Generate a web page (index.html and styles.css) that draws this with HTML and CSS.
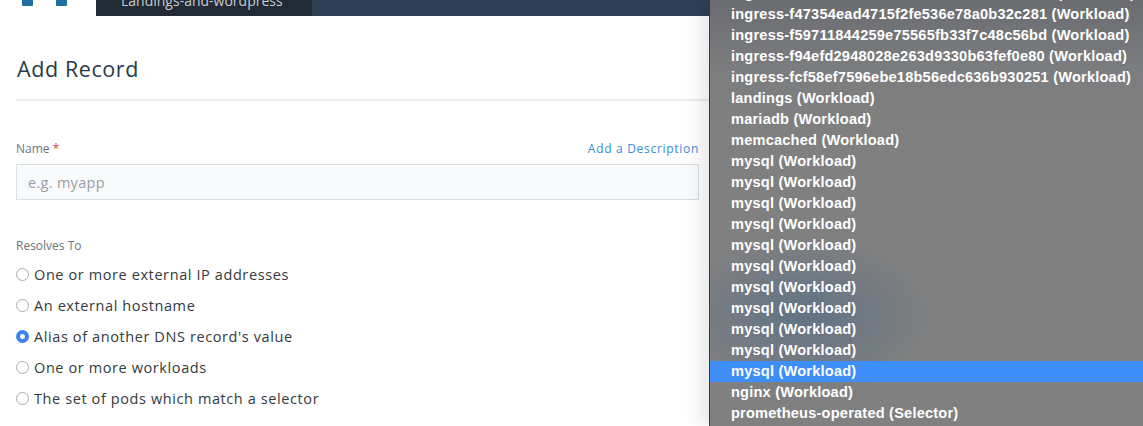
FILE: index.html
```html
<!DOCTYPE html>
<html>
<head>
<meta charset="utf-8">
<link rel="stylesheet" href="styles.css">
</head>
<body>
<header class="topbar">
  <div class="logo"><span class="sq"></span><span class="sq"></span></div>
  <div class="tab"><span class="tab-text">Landings-and-wordpress</span></div>
  <div class="bar-rest"></div>
</header>
<main class="page">
  <h1 class="title">Add Record</h1>
  <div class="rule"></div>
  <section class="form">
    <div class="label-row">
      <span class="label">Name <span class="req">*</span></span>
      <a class="link">Add a Description</a>
    </div>
    <div class="input"><span class="placeholder">e.g. myapp</span></div>
    <div class="label resolves">Resolves To</div>
    <ul class="radios">
      <li><span class="radio"></span>One or more external IP addresses</li>
      <li><span class="radio"></span>An external hostname</li>
      <li><span class="radio on"></span>Alias of another DNS record's value</li>
      <li><span class="radio"></span>One or more workloads</li>
      <li><span class="radio"></span>The set of pods which match a selector</li>
    </ul>
  </section>
</main>
<div class="menu">
  <ul class="menu-list">
    <li>ingress-ec4c9ab5e5e4bd0e7ed3a4d4ffe0e7e0 (Workload)</li>
    <li>ingress-f47354ead4715f2fe536e78a0b32c281 (Workload)</li>
    <li>ingress-f59711844259e75565fb33f7c48c56bd (Workload)</li>
    <li>ingress-f94efd2948028e263d9330b63fef0e80 (Workload)</li>
    <li>ingress-fcf58ef7596ebe18b56edc636b930251 (Workload)</li>
    <li>landings (Workload)</li>
    <li>mariadb (Workload)</li>
    <li>memcached (Workload)</li>
    <li>mysql (Workload)</li>
    <li>mysql (Workload)</li>
    <li>mysql (Workload)</li>
    <li>mysql (Workload)</li>
    <li>mysql (Workload)</li>
    <li>mysql (Workload)</li>
    <li>mysql (Workload)</li>
    <li>mysql (Workload)</li>
    <li>mysql (Workload)</li>
    <li>mysql (Workload)</li>
    <li class="sel">mysql (Workload)</li>
    <li>nginx (Workload)</li>
    <li>prometheus-operated (Selector)</li>
  </ul>
</div>
</body>
</html>
```
FILE: styles.css
```css
html, body {
  margin: 0;
  padding: 0;
  width: 1143px;
  height: 426px;
  overflow: hidden;
  background: #ffffff;
  font-family: "Open Sans", "Lato", sans-serif;
}
.topbar {
  display: flex;
  height: 16px;
}
.logo {
  width: 96px;
  display: flex;
  gap: 23px;
  padding-left: 22px;
  box-sizing: border-box;
}
.sq {
  width: 11px;
  height: 6px;
  background: #1f6fa5;
  border-radius: 0 0 1px 1px;
}
.tab {
  width: 216px;
  background: #212a35;
  overflow: hidden;
}
.tab-text {
  display: block;
  margin-top: -9px;
  margin-left: 25px;
  color: #c6ccd3;
  font-size: 14px;
  line-height: 20px;
}
.bar-rest {
  flex: 1;
  background: #2f4055;
}
.page {
  padding: 0 0 0 16px;
}
.title {
  margin: 0;
  padding-top: 40px;
  height: 43px;
  font-weight: 400;
  font-size: 21.5px;
  line-height: 26px;
  color: #2b3a4a;
  padding-left: 1px;
  letter-spacing: 0.6px;
}
.rule {
  height: 2px;
  background: #e9eded;
}
.form {
  width: 683px;
  padding-top: 40px;
}
.label-row {
  display: flex;
  justify-content: space-between;
  align-items: baseline;
  height: 16px;
}
.label {
  font-size: 12px;
  color: #707478;
  line-height: 16px;
}
.req {
  color: #e33d3d;
}
.link {
  font-size: 12px;
  color: #3a8dd4;
  letter-spacing: 0.7px;
  line-height: 16px;
}
.input {
  margin-top: 7px;
  height: 34px;
  border: 1px solid #d8e0e3;
  background: #f9fafb;
  display: flex;
  align-items: center;
  padding-left: 11px;
}
.placeholder {
  font-size: 14.5px;
  color: #9a9ea3;
  letter-spacing: 0.3px;
}
.resolves {
  margin-top: 38px;
}
.radios {
  list-style: none;
  margin: 5px 0 0;
  padding: 0;
}
.radios li {
  display: flex;
  align-items: center;
  height: 31px;
  font-size: 14.5px;
  color: #333a40;
  letter-spacing: 0.6px;
}
.radio {
  width: 13px;
  height: 13px;
  border: 1px solid #a8acb0;
  border-radius: 50%;
  margin-right: 5px;
  box-sizing: border-box;
  background: #fff;
  flex: none;
}
.radio.on {
  border: 4.5px solid #3b82f0;
  background: #fff;
}
.menu {
  position: absolute;
  top: 0;
  right: 0;
  width: 434px;
  height: 426px;
  border-left: 1px solid #3c3c3c;
  box-sizing: border-box;
  background:
    radial-gradient(ellipse 130px 80px at 95px 315px, rgba(85,110,135,0.7), rgba(85,110,135,0) 100%),
    linear-gradient(#6a6c70 0, #7c7d7f 70px, #808080 140px, #808080 100%);
  box-shadow: -8px 0 18px rgba(0,0,0,0.10);
  overflow: hidden;
}
.menu-list {
  list-style: none;
  margin: -17px 0 0;
  padding: 0;
}
.menu-list li {
  height: 21px;
  line-height: 21px;
  padding-left: 21px;
  color: #ffffff;
  font-family: "Liberation Sans", Arial, sans-serif;
  font-weight: 700;
  font-size: 14.6px;
  letter-spacing: 0.2px;
  white-space: nowrap;
}
.menu-list li.sel {
  background: #3d8ef8;
}
```
